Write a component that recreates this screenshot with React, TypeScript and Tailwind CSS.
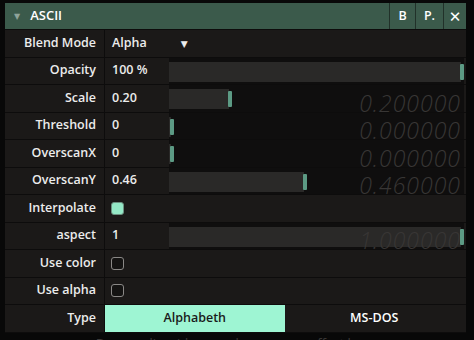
import React from "react"

type Row =
  | { kind: "select"; label: string; value: string }
  | { kind: "slider"; label: string; value: string; pos: number; num?: string }
  | { kind: "check"; label: string; checked: boolean }
  | { kind: "choice"; label: string; options: string[]; active: number }

const rows: Row[] = [
  { kind: "select", label: "Blend Mode", value: "Alpha" },
  { kind: "slider", label: "Opacity", value: "100 %", pos: 1 },
  { kind: "slider", label: "Scale", value: "0.20", pos: 0.2, num: "0.200000" },
  { kind: "slider", label: "Threshold", value: "0", pos: 0, num: "0.000000" },
  { kind: "slider", label: "OverscanX", value: "0", pos: 0, num: "0.000000" },
  { kind: "slider", label: "OverscanY", value: "0.46", pos: 0.46, num: "0.460000" },
  { kind: "check", label: "Interpolate", checked: true },
  { kind: "slider", label: "aspect", value: "1", pos: 1, num: "1.000000" },
  { kind: "check", label: "Use color", checked: false },
  { kind: "check", label: "Use alpha", checked: false },
  { kind: "choice", label: "Type", options: ["Alphabeth", "MS-DOS"], active: 0 },
]

function Slider({ pos, num }: { pos: number; num?: string }) {
  const x = Math.round(pos * 290)
  return (
    <div className="relative flex-1 self-stretch overflow-hidden bg-[#0f0e0e] mr-[2px]">
      <div className="absolute left-0 top-[4px] h-[20px] bg-[#2a2928]" style={{ width: x + 2 }} />
      {num && (
        <span className="absolute right-[3px] bottom-[-3px] italic font-light text-[23px] leading-none text-[#383635] tracking-[1px]">
          {num}
        </span>
      )}
      <div className="absolute top-[6px] h-[16px] w-[4px] rounded-[1px] bg-[#5c9a84]" style={{ left: x + 1 }} />
    </div>
  )
}

function Check({ checked }: { checked: boolean }) {
  return (
    <div
      className={`w-[13px] h-[13px] rounded-[3px] border ${
        checked ? "bg-[#94e8c6] border-[#6c8f80]" : "bg-[#141312] border-[#8a8886]"
      }`}
    />
  )
}

export default function App() {
  return (
    <div
      className="w-[474px] h-[340px] overflow-hidden bg-[#080808] pl-[5px] pr-[8px] pt-[3px] text-[12.5px] font-semibold text-[#ececec]"
      style={{ fontFamily: '"Open Sans", "DejaVu Sans", sans-serif' }}
    >
      <div className="flex h-[27px] bg-[#3b5a4b] border-b border-[#0d0c0c]">
        <div className="flex flex-1 items-center pl-[9px] gap-[10px]">
          <span className="text-[8px] text-[#8fa39a]">▼</span>
          <span className="text-white text-[13px]">ASCII</span>
        </div>
        <div className="flex w-[26px] items-center justify-center border-l border-[#213129] text-white">B</div>
        <div className="flex w-[28px] items-center justify-center border-l border-[#213129] text-white">P.</div>
        <div className="flex w-[23px] items-center justify-center border-l border-[#213129] text-white text-[15px] font-normal">✕</div>
      </div>

      {rows.map((r) => (
        <div key={r.label} className="flex h-[27.5px] bg-[#1b1918] border-b border-[#0d0c0c]">
          <div className="w-[100px] shrink-0 flex items-center justify-end pr-[8px] border-r border-[#0d0c0c]">
            {r.label}
          </div>
          {r.kind === "select" && (
            <div className="flex items-center pl-[7px] gap-[34px]">
              <span>{r.value}</span>
              <span className="text-[9px]">▼</span>
            </div>
          )}
          {r.kind === "slider" && (
            <>
              <div className="w-[64px] shrink-0 flex items-center pl-[7px]">{r.value}</div>
              <Slider pos={r.pos} num={r.num} />
            </>
          )}
          {r.kind === "check" && (
            <div className="flex items-center pl-[6px]">
              <Check checked={r.checked} />
            </div>
          )}
          {r.kind === "choice" && (
            <div className="flex flex-1 mr-[2px]">
              {r.options.map((o, i) => (
                <div
                  key={o}
                  className={`flex-1 flex items-center justify-center ${
                    i === r.active ? "bg-[#9ef5d3] text-[#1a1a1a]" : "text-white"
                  }`}
                >
                  {o}
                </div>
              ))}
            </div>
          )}
        </div>
      ))}

      <div className="text-center text-[#3c3a38] font-normal text-[13px] pt-[1px]">Drop audio, video, mask, source or effect here</div>
    </div>
  )
}
